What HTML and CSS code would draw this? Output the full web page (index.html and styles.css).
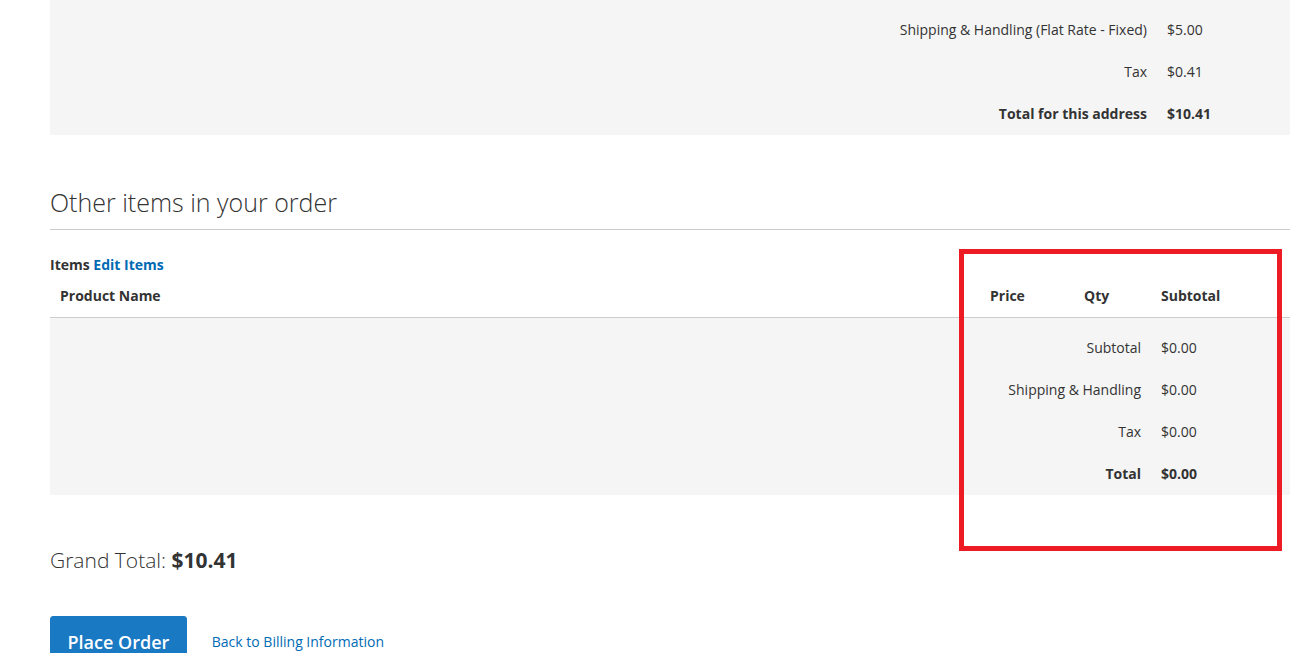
FILE: index.html
```html
<!DOCTYPE html>
<html lang="en">

<head>
    <meta charset="UTF-8">
    <meta name="viewport" content="width=device-width, initial-scale=1.0">
    <title>Review Order</title>
    <link rel="stylesheet" href="styles.css">
</head>

<body>
    <div class="page">
        <div class="address-totals">
            <table class="totals">
                <tr>
                    <th>Shipping &amp; Handling (Flat Rate - Fixed)</th>
                    <td>$5.00</td>
                </tr>
                <tr>
                    <th>Tax</th>
                    <td>$0.41</td>
                </tr>
                <tr class="grand">
                    <th>Total for this address</th>
                    <td>$10.41</td>
                </tr>
            </table>
        </div>

        <div class="block-title">Other items in your order</div>

        <div class="items-caption">Items <a href="#">Edit Items</a></div>
        <table class="items">
            <thead>
                <tr>
                    <th class="col-name">Product Name</th>
                    <th class="col-price">Price</th>
                    <th class="col-qty">Qty</th>
                    <th class="col-sub">Subtotal</th>
                </tr>
            </thead>
            <tfoot>
                <tr class="first">
                    <th colspan="3">Subtotal</th>
                    <td>$0.00</td>
                </tr>
                <tr>
                    <th colspan="3">Shipping &amp; Handling</th>
                    <td>$0.00</td>
                </tr>
                <tr>
                    <th colspan="3">Tax</th>
                    <td>$0.00</td>
                </tr>
                <tr class="grand">
                    <th colspan="3">Total</th>
                    <td>$0.00</td>
                </tr>
            </tfoot>
        </table>

        <div class="grand-total">Grand Total: <strong>$10.41</strong></div>

        <div class="actions">
            <button class="primary">Place Order</button>
            <a href="#" class="back">Back to Billing Information</a>
        </div>

        <!-- highlight box over the totals column -->
        <div class="highlight"></div>
    </div>
</body>

</html>
```

FILE: styles.css
```css
body {
    margin: 0;
    font-family: "Open Sans", "Liberation Sans", sans-serif;
    font-size: 14px;
    line-height: 20px;
    color: #333;
    background: #fff;
}

a {
    color: #006bb4;
    text-decoration: none;
}

.page {
    position: relative;
    padding: 0 25px 0 50px;
    height: 653px;
    overflow: hidden;
}

table {
    border-collapse: collapse;
    width: 100%;
}

.address-totals {
    background: #f5f5f5;
    padding-top: 9px;
}

.totals th {
    text-align: right;
    font-weight: normal;
    padding: 11px 10px;
}

.totals td {
    width: 113px;
    padding: 11px 10px;
}

.totals .grand th,
.totals .grand td {
    font-weight: bold;
}

.block-title {
    margin-top: 53px;
    font-size: 25px;
    font-weight: 300;
    line-height: 28px;
    padding-bottom: 13px;
    border-bottom: 1px solid #ccc;
}

.items-caption {
    margin-top: 25px;
    font-weight: bold;
}

.items thead th {
    text-align: left;
    font-weight: bold;
    padding: 11px 10px;
    border-bottom: 1px solid #ccc;
}

.col-price {
    width: 74px;
}

.col-qty {
    width: 57px;
}

.col-sub {
    width: 119px;
}

.items tfoot {
    background: #f5f5f5;
}

.items tfoot th {
    text-align: right;
    font-weight: normal;
    padding: 11px 10px;
}

.items tfoot td {
    padding: 11px 10px;
}

.items tfoot .first th,
.items tfoot .first td {
    padding-top: 20px;
}

.items tfoot .grand th,
.items tfoot .grand td {
    font-weight: bold;
}

.grand-total {
    margin-top: 50px;
    font-size: 21px;
    font-weight: 300;
    line-height: 30px;
}

.grand-total strong {
    font-weight: bold;
}

.actions {
    margin-top: 41px;
    display: flex;
    align-items: center;
}

.primary {
    background: #1979c3;
    border: 1px solid #1979c3;
    color: #fff;
    font-family: inherit;
    font-size: 18px;
    font-weight: 600;
    line-height: 22px;
    padding: 14px 16.5px;
    border-radius: 3px;
}

.back {
    margin-left: 25px;
}

.highlight {
    position: absolute;
    left: 959px;
    top: 249px;
    width: 313px;
    height: 292px;
    border: 5px solid #ed1c24;
}
```
